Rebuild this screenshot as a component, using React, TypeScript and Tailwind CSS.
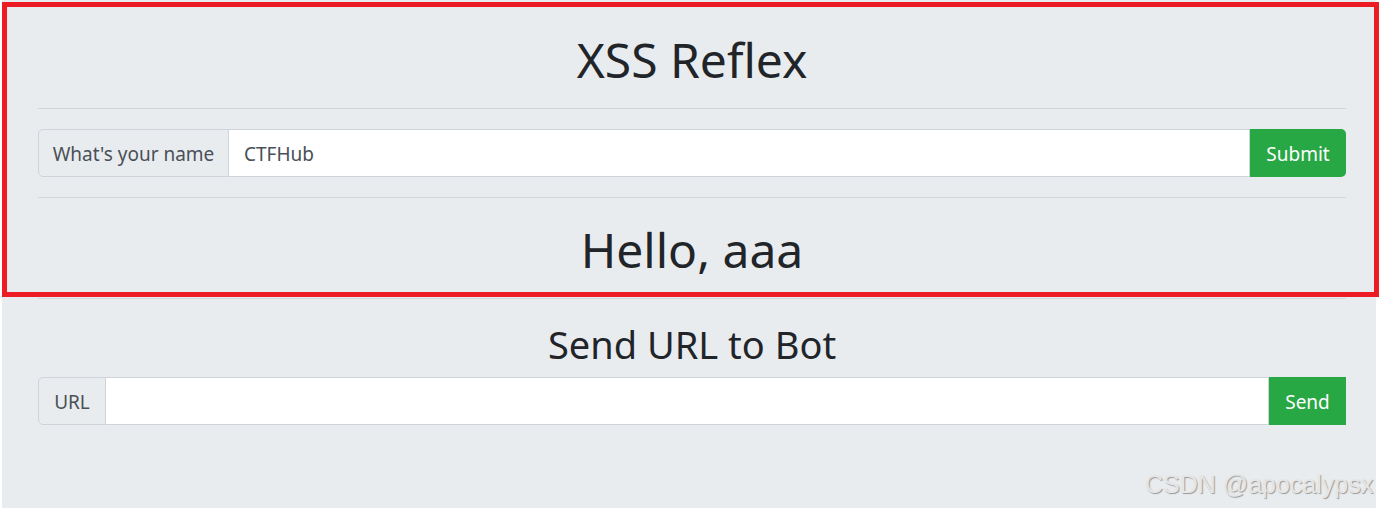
import React from 'react'

// Reflected XSS challenge page, rendered at 125% of a Bootstrap jumbotron
function Rule() {
  return <div className="h-px w-full bg-[#d3d6d9]" />
}

export default function App() {
  return (
    <div className="relative h-[508px] w-[1379px] overflow-hidden bg-white font-['Noto_Sans','Open_Sans',sans-serif] text-[#212529]">
      <div className="ml-[2px] h-[508px] w-[1374px] bg-[#e9ecef] pt-[30px]">
        <div className="ml-[36px] flex w-[1308px] flex-col">
          <div className="flex h-[60px] items-center justify-center text-[48px] leading-none">XSS Reflex</div>
          <div className="mt-[18px]">
            <Rule />
          </div>

          {/* name form */}
          <form className="mt-[20px] flex h-[48px]" onSubmit={e => e.preventDefault()}>
            <span className="flex w-[191px] items-center justify-center rounded-l-[5px] border border-[#ced4da] bg-[#e9ecef] pt-[3px] text-[19px] text-[#495057]">
              What's your name
            </span>
            <input
              className="min-w-0 flex-1 border-y border-r border-[#ced4da] bg-white px-[15px] pt-[3px] text-[19px] text-[#495057] outline-none"
              defaultValue="CTFHub"
            />
            <button className="w-[96px] rounded-r-[5px] bg-[#28a745] pt-[3px] text-[19px] text-white">Submit</button>
          </form>

          <div className="mt-[20px]">
            <Rule />
          </div>
          <div className="mt-[22px] flex h-[60px] items-center justify-center text-[48px] leading-none">Hello, aaa</div>
          <div className="mt-[18px]">
            <Rule />
          </div>

          {/* bot form */}
          <div className="mt-[21px] flex h-[48px] items-center justify-center text-[38px] leading-none">Send URL to Bot</div>
          <form className="mt-[9px] flex h-[48px]" onSubmit={e => e.preventDefault()}>
            <span className="flex w-[68px] items-center justify-center rounded-l-[5px] border border-[#ced4da] bg-[#e9ecef] pt-[3px] text-[19px] text-[#495057]">
              URL
            </span>
            <input className="min-w-0 flex-1 border-y border-r border-[#ced4da] bg-white px-[15px] pt-[3px] text-[19px] text-[#495057] outline-none" />
            <button className="w-[77px] bg-[#28a745] pt-[3px] text-[19px] text-white">Send</button>
          </form>
        </div>
      </div>

      {/* screenshot annotation */}
      <div className="pointer-events-none absolute left-[2px] top-[2px] h-[295px] w-[1377px] border-[5px] border-[#ed1c24]" />

      <div className="pointer-events-none absolute left-[1145px] top-[472px] whitespace-nowrap font-['Liberation_Sans',Arial,sans-serif] text-[25px] leading-none text-[#e6e6e6] [text-shadow:1px_1px_1px_#9a9a9a]">
        CSDN @apocalypsx
      </div>
    </div>
  )
}
